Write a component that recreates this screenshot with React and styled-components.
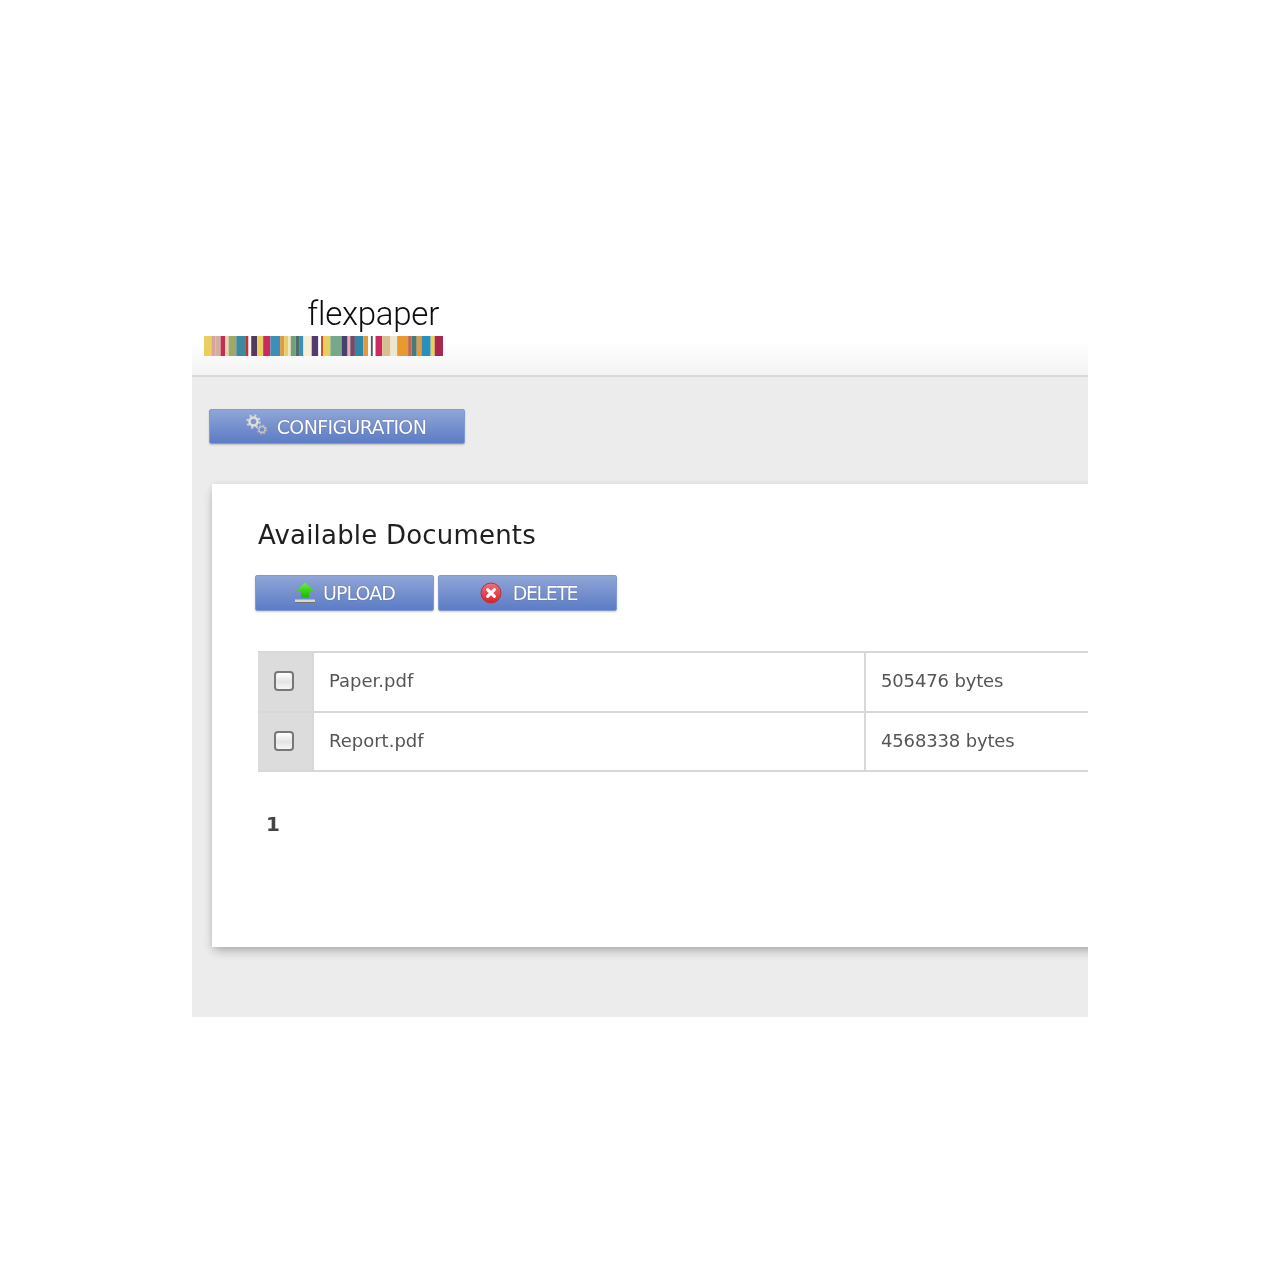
import React from 'react'
import styled, { createGlobalStyle } from 'styled-components'

const GlobalStyle = createGlobalStyle`
  body {
    margin: 0;
    background: #fff;
    font-family: 'DejaVu Sans', Verdana, sans-serif;
  }
`

const stripes = [
  [22, '#e8d060'], [12, '#e0a0a0'], [16, '#d0b0a0'], [14, '#c92a55'], [10, '#e8d8b0'],
  [23, '#a0a868'], [27, '#3d8aa0'], [10, '#c8302c'], [8, '#fff'], [18, '#553a60'],
  [18, '#e8d060'], [22, '#c92a60'], [29, '#3a90b8'], [13, '#e09a40'], [12, '#e8d060'],
  [7, '#eee8c0'], [15, '#70a080'], [10, '#4d7060'], [13, '#3a90b8'], [25, '#f5efd5'],
  [20, '#553a70'], [8, '#fff'], [6, '#d05030'], [22, '#e8d060'], [34, '#78a888'],
  [18, '#4a4070'], [8, '#e8b0b0'], [14, '#7a4868'], [25, '#3088a8'], [15, '#e09a40'],
  [8, '#fff'], [6, '#505860'], [8, '#fff'], [20, '#d02860'], [25, '#d8c090'],
  [20, '#ece8d0'], [33, '#e89a30'], [10, '#c06850'], [16, '#4a7a78'], [14, '#e09a40'],
  [28, '#2890c0'], [12, '#f0d050'], [25, '#a82850'],
]

const files = [
  { name: 'Paper.pdf', size: '505476 bytes' },
  { name: 'Report.pdf', size: '4568338 bytes' },
]

const StripeLogo = () => {
  let x = 0
  return (
    <StripeSvg viewBox='0 0 719 60' preserveAspectRatio='none'>
      {stripes.map(([w, color], i) => {
        const rect = <rect key={i} x={x} y='0' width={w} height='60' fill={color} />
        x += w
        return rect
      })}
    </StripeSvg>
  )
}

const GearsIcon = () => (
  <svg width='22' height='22' viewBox='0 0 22 22'>
    <circle cx='7.5' cy='7.5' r='6' fill='none' stroke='#cfcfcf' strokeWidth='2.6' strokeDasharray='2.2 2.51' />
    <circle cx='7.5' cy='7.5' r='4' fill='none' stroke='#dedede' strokeWidth='2.4' />
    <circle cx='16' cy='15.5' r='4.2' fill='none' stroke='#b4b4b4' strokeWidth='2' strokeDasharray='1.7 1.6' />
    <circle cx='16' cy='15.5' r='3' fill='none' stroke='#c4c4c4' strokeWidth='1.4' />
  </svg>
)

const UploadIcon = () => (
  <svg width='22' height='22' viewBox='0 0 22 22'>
    <defs>
      <linearGradient id='uploadGreen' x1='0' y1='0' x2='0' y2='1'>
        <stop offset='0' stopColor='#6cf03c' />
        <stop offset='1' stopColor='#18b800' />
      </linearGradient>
    </defs>
    <path d='M11 0.5 L20.5 9.5 H15 V15.5 H7 V9.5 H1.5 Z' fill='url(#uploadGreen)' />
    <rect x='1' y='17.5' width='20' height='2.5' fill='#d8d8d0' />
    <rect x='1' y='20' width='20' height='1' fill='#68707c' />
  </svg>
)

const DeleteIcon = () => (
  <svg width='22' height='22' viewBox='0 0 22 22'>
    <defs>
      <linearGradient id='deleteRed' x1='0' y1='0' x2='0' y2='1'>
        <stop offset='0' stopColor='#f0707a' />
        <stop offset='1' stopColor='#d8202c' />
      </linearGradient>
    </defs>
    <circle cx='11' cy='11' r='10' fill='url(#deleteRed)' stroke='#b8323e' strokeWidth='1' />
    <path d='M7.6 7.6 L14.4 14.4 M14.4 7.6 L7.6 14.4' stroke='#fff' strokeWidth='3' strokeLinecap='round' />
  </svg>
)

const App = () => {
  return (
    <>
      <GlobalStyle />
      <Frame>
        <Header>
          <Logo>
            <LogoText>flexpaper</LogoText>
            <StripeLogo />
          </Logo>
        </Header>
        <Content>
          <ConfigButton>
            <GearsIcon />
            CONFIGURATION
          </ConfigButton>
          <Card>
            <Title>Available Documents</Title>
            <ButtonRow>
              <BlueButton $gap={7} $tracking={-0.9}>
                <UploadIcon />
                UPLOAD
              </BlueButton>
              <DeleteButton $gap={11} $tracking={-1.4}>
                <DeleteIcon />
                DELETE
              </DeleteButton>
            </ButtonRow>
            <FileTable>
              <tbody>
                {files.map((file) => (
                  <tr key={file.name}>
                    <CheckCell>
                      <CheckBox />
                    </CheckCell>
                    <NameCell>{file.name}</NameCell>
                    <SizeCell>{file.size}</SizeCell>
                  </tr>
                ))}
              </tbody>
            </FileTable>
            <Pager>1</Pager>
          </Card>
        </Content>
      </Frame>
    </>
  )
}

export default App

const Frame = styled.div`
  width: 896px;
  margin: 263px auto 0;
  filter: blur(0.4px);
`
const Header = styled.header`
  height: 112px;
  border-bottom: 2px solid #d8d8d8;
  background: linear-gradient(to bottom, #fff 0%, #fff 70%, #f3f3f3 100%);
  display: flex;
  align-items: flex-end;
  padding-left: 12px;
`
const Logo = styled.div`
  width: 239px;
  display: flex;
  flex-direction: column;
  align-items: flex-end;
  margin-bottom: 19px;
`
const LogoText = styled.div`
  font-family: Roboto, 'Liberation Sans', Arial, sans-serif;
  font-size: 33px;
  font-weight: 300;
  line-height: 36px;
  letter-spacing: -0.25px;
  color: #0c0c0c;
  margin-right: 4px;
  margin-bottom: 4px;
`
const StripeSvg = styled.svg`
  display: block;
  width: 239px;
  height: 20px;
`
const Content = styled.main`
  height: 640px;
  box-sizing: border-box;
  background: #ececec;
  padding: 32px 0 0 17px;
  overflow: hidden;
`
const BlueButton = styled.button`
  width: 179px;
  height: 36px;
  padding: 0;
  display: flex;
  align-items: center;
  justify-content: center;
  gap: ${(props) => props.$gap}px;
  border: 1px solid #7f9ad4;
  border-radius: 2px;
  background: linear-gradient(to bottom, #8fa6d8 0%, #7690cd 50%, #5c7cc5 100%);
  box-shadow: 0 1px 2px rgba(0, 0, 0, 0.2);
  color: #fff;
  font-family: 'DejaVu Sans', Verdana, sans-serif;
  font-size: 19px;
  letter-spacing: ${(props) => props.$tracking}px;
  text-shadow: 0 0 1px rgba(40, 50, 90, 0.7);
`
const ConfigButton = styled(BlueButton)`
  width: 256px;
  height: 35px;
  gap: 9px;
  padding-right: 2px;
  letter-spacing: -0.65px;
  svg {
    margin-top: -4px;
  }
`
const DeleteButton = styled(BlueButton)`
  padding-left: 2px;
`
const Card = styled.section`
  width: 1000px;
  height: 463px;
  box-sizing: border-box;
  margin: 40px 0 0 3px;
  padding: 32px 0 0 46px;
  background: #fff;
  box-shadow: 0 5px 10px -2px rgba(0, 0, 0, 0.3), 0 0 6px rgba(0, 0, 0, 0.05);
`
const Title = styled.h1`
  margin: 0;
  font-size: 26px;
  line-height: 38px;
  font-weight: 400;
  letter-spacing: 0.2px;
  color: #1f1f1f;
`
const ButtonRow = styled.div`
  display: flex;
  gap: 4px;
  margin: 21px 0 0 -3px;
`
const FileTable = styled.table`
  margin-top: 40px;
  width: 900px;
  table-layout: fixed;
  border-collapse: collapse;
  color: #555;
  font-size: 18px;
`
const CheckCell = styled.td`
  width: 51px;
  height: 56.5px;
  padding: 0 3px 1px 0;
  background: #dcdcdc;
  border-top: 2px solid #d8d8d8;
  border-bottom: 2px solid #d8d8d8;
  vertical-align: middle;
`
const CheckBox = styled.span`
  display: block;
  width: 16px;
  height: 16px;
  margin: 0 auto;
  border: 2px solid #777;
  border-radius: 4px;
  background: linear-gradient(to bottom, #fff 0%, #e4e4e4 55%, #f6f6f6 100%);
`
const NameCell = styled.td`
  width: 552px;
  padding: 0 0 2px 15px;
  box-sizing: border-box;
  border: 2px solid #d8d8d8;
`
const SizeCell = styled.td`
  padding: 0 0 2px 15px;
  letter-spacing: -0.15px;
  border-top: 2px solid #d8d8d8;
  border-bottom: 2px solid #d8d8d8;
`
const Pager = styled.div`
  margin: 38px 0 0 8px;
  font-size: 20px;
  line-height: 28px;
  font-weight: 700;
  color: #444;
`
